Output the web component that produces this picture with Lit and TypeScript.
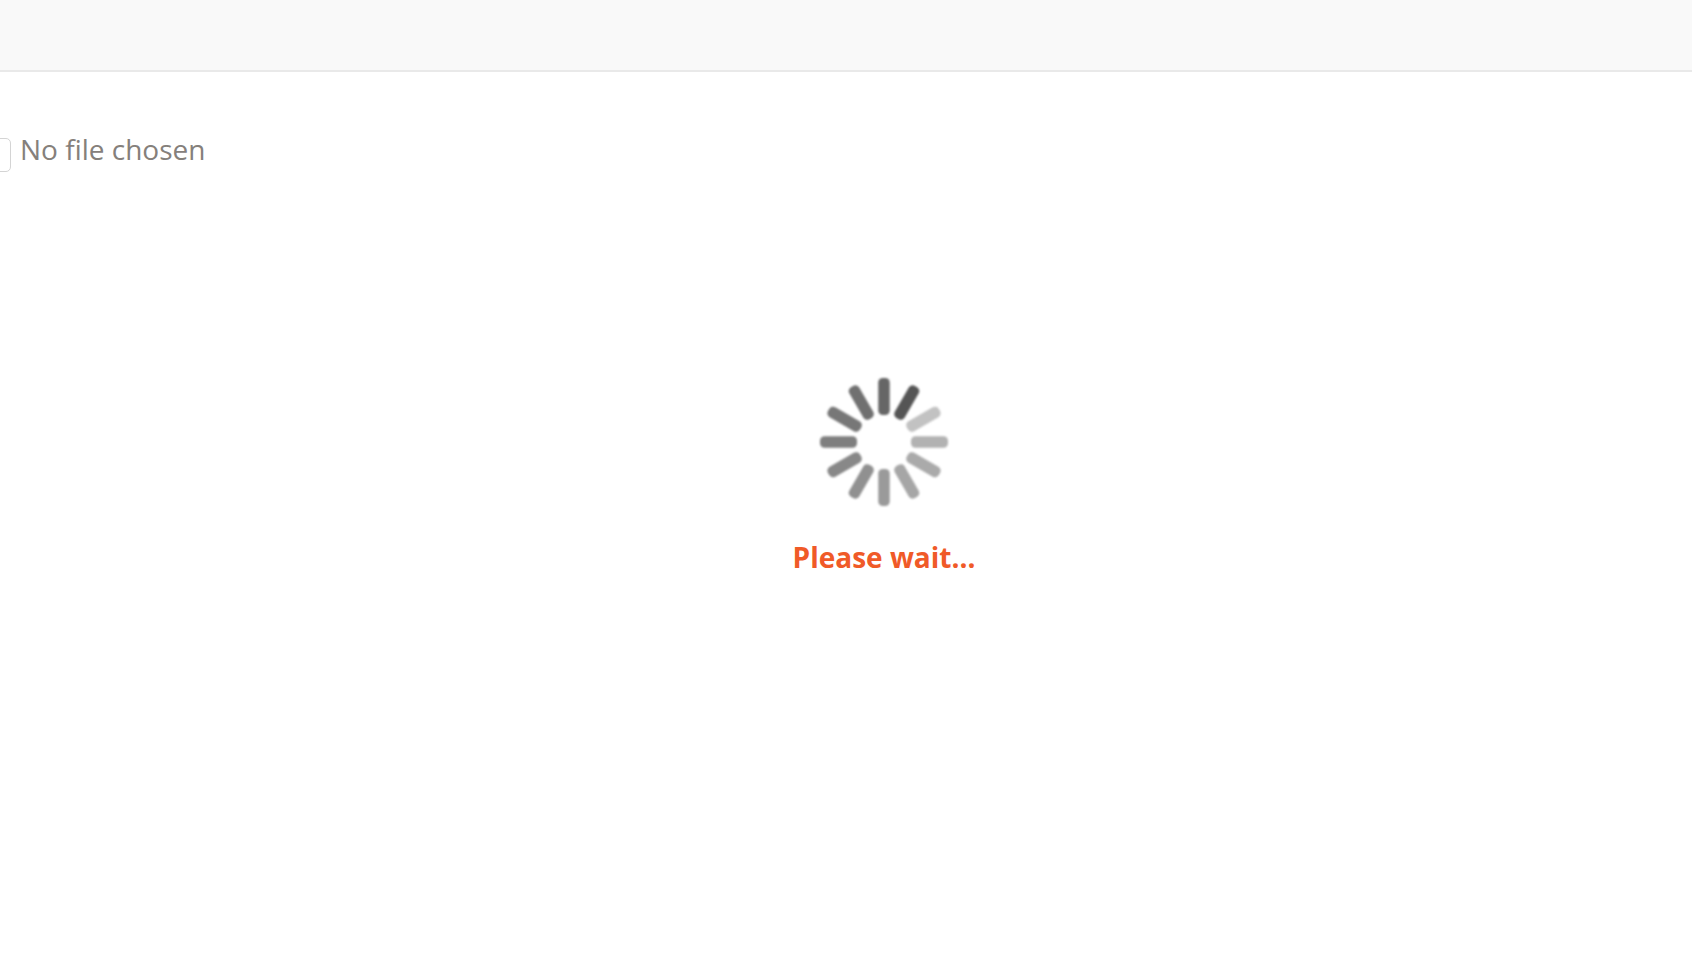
import { LitElement, html, css, svg } from "lit";
import { customElement } from "lit/decorators.js";

const SHADES = ["#666", "#555", "#c2c2c2", "#b2b2b2", "#aaa", "#a6a6a6", "#9a9a9a", "#909090", "#888", "#7f7f7f", "#777", "#707070"];

@customElement("app-root")
export class AppRoot extends LitElement {
  static styles = css`
    :host { display: block; height: 966px; overflow: hidden; background: #fff; font-family: "Open Sans", sans-serif; }
    .bar { height: 70px; background: #f9f9f9; border-bottom: 2px solid #e9e9e9; }
    .file { display: flex; align-items: flex-start; height: 100px; padding-top: 58px; gap: 9px; margin-left: -20px; }
    .btn { width: 29px; height: 32px; margin-top: 8px; border: 1px solid #d4d4d4; border-radius: 5px; background: #fff; }
    .name { font-size: 28px; line-height: 38px; color: #85807b; }
    .main { display: flex; flex-direction: column; align-items: center; padding-top: 147px; padding-left: 76px; }
    svg { display: block; width: 130px; height: 130px; filter: blur(1px); }
    .wait { margin-top: 31px; font-size: 28px; line-height: 38px; font-weight: 700; color: #f05a28; }
  `;

  render() {
    return html`
      <div class="bar"></div>
      <div class="file">
        <div class="btn"></div>
        <span class="name">No file chosen</span>
      </div>
      <div class="main">
        <svg viewBox="-65 -65 130 130">
          ${SHADES.map((c, i) => svg`<rect x="-5.75" y="-64" width="11.5" height="37" rx="4.5" fill=${c} transform="rotate(${i * 30})" />`)}
        </svg>
        <div class="wait">Please wait...</div>
      </div>
    `;
  }
}
